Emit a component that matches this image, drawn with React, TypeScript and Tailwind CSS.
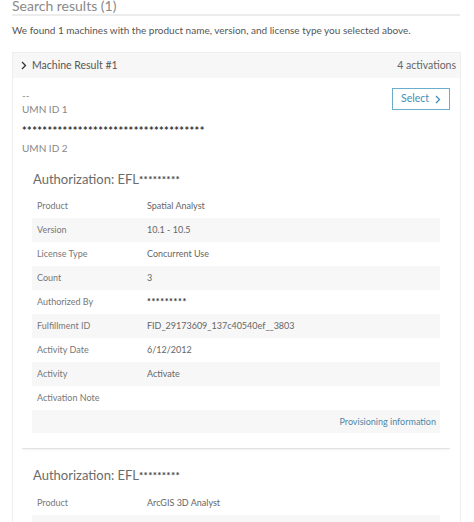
import React from "react";

const rows: [string, string][] = [
  ["Product", "Spatial Analyst"],
  ["Version", "10.1 - 10.5"],
  ["License Type", "Concurrent Use"],
  ["Count", "3"],
  ["Authorized By", "*********"],
  ["Fulfillment ID", "FID_29173609_137c40540ef__3803"],
  ["Activity Date", "6/12/2012"],
  ["Activity", "Activate"],
  ["Activation Note", ""],
];

const rows2: [string, string][] = [
  ["Product", "ArcGIS 3D Analyst"],
  ["Version", "10.1 - 10.5"],
];

function Row({ label, value, i }: { label: string; value: string; i: number }) {
  const masked = value.startsWith("*");
  return (
    <div className={`flex h-[24px] items-center ${i % 2 === 1 ? "bg-[#f7f7f7]" : ""}`}>
      <div className="w-[115px] pl-[5px] text-[#777]">{label}</div>
      <div className={masked ? "font-bold text-[#333] tracking-[0.6px]" : "text-[#666]"}>{value}</div>
    </div>
  );
}

export default function App() {
  return (
    <div
      className="w-[474px] h-[522px] overflow-hidden bg-white px-[12px] text-[#555]"
      style={{ fontFamily: "Lato, 'Open Sans', sans-serif" }}
    >
      <div className="w-[448px] border-b-2 border-[#ececec] text-[14px] leading-[16px] text-[#8a8a8a] -mt-[2px]">
        Search results (1)
      </div>
      <div className="mt-[7px] text-[10px] leading-[14px] text-[#555]">
        We found 1 machines with the product name, version, and license type you selected above.
      </div>
      <div className="mt-[15px] w-[449px] border border-[#eeeeee] border-b-0 h-[600px]">
        <div className="flex h-[25px] items-center justify-between bg-[#f7f7f7] pl-[7px] pr-[4px] text-[10.5px] text-[#555]">
          <div className="flex items-center gap-[4px]">
            <svg width="8" height="9" viewBox="0 0 8 9" fill="none">
              <path d="M2 1 L5.5 4.5 L2 8" stroke="#333" strokeWidth="1.3" />
            </svg>
            <span>Machine Result #1</span>
          </div>
          <span className="text-[#666]">4 activations</span>
        </div>
        <div className="px-[9px]">
          <div className="flex justify-between">
            <div className="pt-[12px] text-[10px] text-[#888]">
              <div className="leading-[10px]">--</div>
              <div className="leading-[14px] mt-[2px]">UMN ID 1</div>
            </div>
            <div className="mt-[10px] mr-[1px] flex h-[22px] w-[58px] items-center justify-center gap-[6px] border border-[#6aaec9] text-[10.5px] text-[#3f8fb6]">
              <span>Select</span>
              <svg width="6" height="9" viewBox="0 0 6 9" fill="none">
                <path d="M1 1 L4.5 4.5 L1 8" stroke="#3f8fb6" strokeWidth="1.3" />
              </svg>
            </div>
          </div>
          <div className="mt-[8px] text-[11px] font-bold leading-[14px] text-[#333] tracking-[0.4px]">
            {"*".repeat(36)}
          </div>
          <div className="mt-[3px] text-[10px] leading-[14px] text-[#888]">UMN ID 2</div>

          <div className="mt-[16px] w-[428px] border-b border-[#e3e3e3] shadow-[0_2px_2px_-1px_rgba(0,0,0,0.06)] px-[10px] pb-[15px]">
            <div className="pl-[1px] text-[13px] leading-[16px] text-[#6b6b6b]">
              Authorization: EFL<span className="font-bold text-[#444] text-[10px] align-top tracking-[0.3px]">*********</span>
            </div>
            <div className="mt-[7px] w-[408px] text-[9px]">
              {rows.map(([l, v], i) => (
                <Row key={l} label={l} value={v} i={i} />
              ))}
              <div className="flex h-[23px] items-center justify-end bg-[#f7f7f7] pr-[4px] text-[9px] text-[#4d88a8]">
                Provisioning information
              </div>
            </div>
          </div>

          <div className="mt-[18px] px-[10px]">
            <div className="pl-[1px] text-[13px] leading-[16px] text-[#6b6b6b]">
              Authorization: EFL<span className="font-bold text-[#444] text-[10px] align-top tracking-[0.3px]">*********</span>
            </div>
            <div className="mt-[8px] w-[408px] text-[9px]">
              {rows2.map(([l, v], i) => (
                <Row key={l} label={l} value={v} i={i} />
              ))}
            </div>
          </div>
        </div>
      </div>
    </div>
  );
}
